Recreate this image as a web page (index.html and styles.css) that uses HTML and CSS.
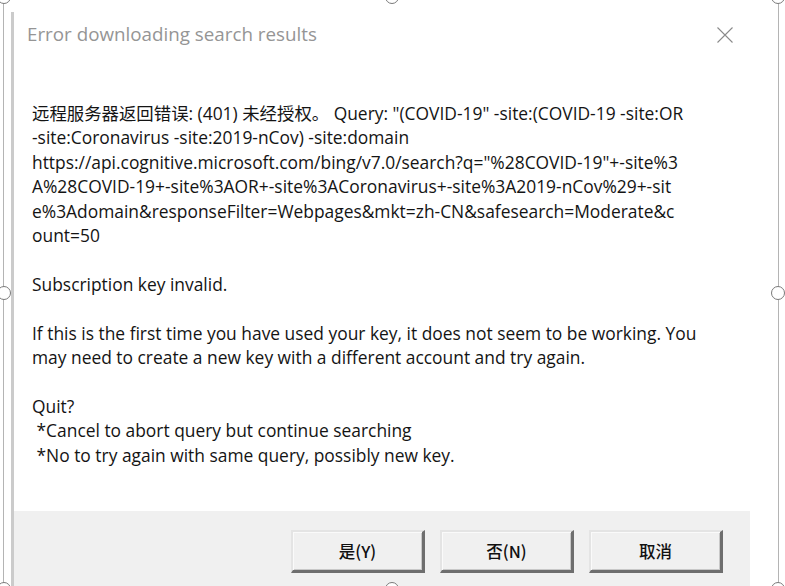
FILE: index.html
```html
<!DOCTYPE html>
<html lang="zh-CN">
<head>
<meta charset="utf-8">
<title>Error downloading search results</title>
<link rel="stylesheet" href="styles.css">
</head>
<body>
<div class="frame">
  <div class="dialog">
    <div class="titlebar">
      <span class="title">Error downloading search results</span>
      <svg class="close" width="16" height="16" viewBox="0 0 16 16"><path d="M0.5 0.5 L15.5 15.5 M15.5 0.5 L0.5 15.5" stroke="#8a8a8a" stroke-width="1.1" fill="none"/></svg>
    </div>
    <div class="body"><p class="msg">远程服务器返回错误: (401) 未经授权。 Query: "(COVID-19" -site:(COVID-19 -site:OR
-site:Coronavirus -site:2019-nCov) -site:domain
https://api.cognitive.microsoft.com/bing/v7.0/search?q="%28COVID-19"+-site%3
A%28COVID-19+-site%3AOR+-site%3ACoronavirus+-site%3A2019-nCov%29+-sit
e%3Adomain&amp;responseFilter=Webpages&amp;mkt=zh-CN&amp;safesearch=Moderate&amp;c
ount=50

Subscription key invalid.

If this is the first time you have used your key, it does not seem to be working. You
may need to create a new key with a different account and try again.

Quit?
 *Cancel to abort query but continue searching
 *No to try again with same query, possibly new key.</p></div>
    <div class="footer">
      <button class="btn">是(Y)</button>
      <button class="btn">否(N)</button>
      <button class="btn">取消</button>
    </div>
  </div>
  <span class="handle h-tl"></span>
  <span class="handle h-tm"></span>
  <span class="handle h-tr"></span>
  <span class="handle h-ml"></span>
  <span class="handle h-mr"></span>
  <span class="handle h-bl"></span>
  <span class="handle h-bm"></span>
  <span class="handle h-br"></span>
</div>
</body>
</html>
```

FILE: styles.css
```css
html, body {
  margin: 0;
  padding: 0;
  background: #ffffff;
  width: 785px;
  height: 586px;
  overflow: hidden;
}

.frame {
  position: relative;
  box-sizing: border-box;
  margin-left: 3px;
  width: 776px;
  height: 586px;
  padding-top: 12px;
  border-left: 1px solid #b4b4b4;
  border-right: 1px solid #b4b4b4;
}

.dialog {
  margin-left: 7px;
  width: 736px;
  height: 574px;
  border-left: 3px solid #cbcbcb;
  background: #ffffff;
  display: flex;
  flex-direction: column;
}

.titlebar {
  height: 46px;
  display: flex;
  align-items: center;
  justify-content: space-between;
  padding-left: 13px;
  padding-right: 17px;
}

.title {
  font-family: "Open Sans", "Noto Sans", sans-serif;
  font-size: 18.8px;
  color: #959595;
  margin-top: -2px;
}

.close {
  display: block;
  margin-top: 0;
}

.body {
  padding-top: 43px;
  padding-left: 18px;
  flex: 1;
}

.msg {
  margin: 0;
  white-space: pre;
  font-family: "Open Sans", "Noto Sans", "Noto Sans CJK SC", sans-serif;
  font-size: 17.4px;
  line-height: 24.4px;
  color: #141414;
}

.footer {
  height: 75px;
  background: #f0f0f0;
  display: flex;
  justify-content: flex-end;
  align-items: flex-start;
  gap: 15px;
  padding-top: 19px;
  padding-right: 27px;
  box-sizing: border-box;
}

.btn {
  width: 134px;
  height: 43px;
  margin: 0;
  padding: 0;
  background: #f0f0f0;
  border-top: 2px solid #e4e4e4;
  border-left: 2px solid #e4e4e4;
  border-right: 3px solid #6e6e6e;
  border-bottom: 3px solid #6e6e6e;
  box-shadow: inset 1px 1px 0 #fafafa, inset -1px -1px 0 #c8c8c8;
  font-family: "Noto Sans CJK SC", "Noto Sans", sans-serif;
  font-size: 16.5px;
  font-weight: 500;
  color: #111111;
}

.handle {
  position: absolute;
  width: 12px;
  height: 12px;
  border: 1px solid #7a7a7a;
  border-radius: 50%;
  background: #ffffff;
}

.h-tl { left: -7px; top: -10px; }
.h-tm { left: 381px; top: -10px; }
.h-tr { left: 767px; top: -10px; }
.h-ml { left: -7px; top: 286px; }
.h-mr { left: 767px; top: 286px; }
.h-bl { left: -7px; top: 582px; }
.h-bm { left: 381px; top: 582px; }
.h-br { left: 767px; top: 582px; }
```
